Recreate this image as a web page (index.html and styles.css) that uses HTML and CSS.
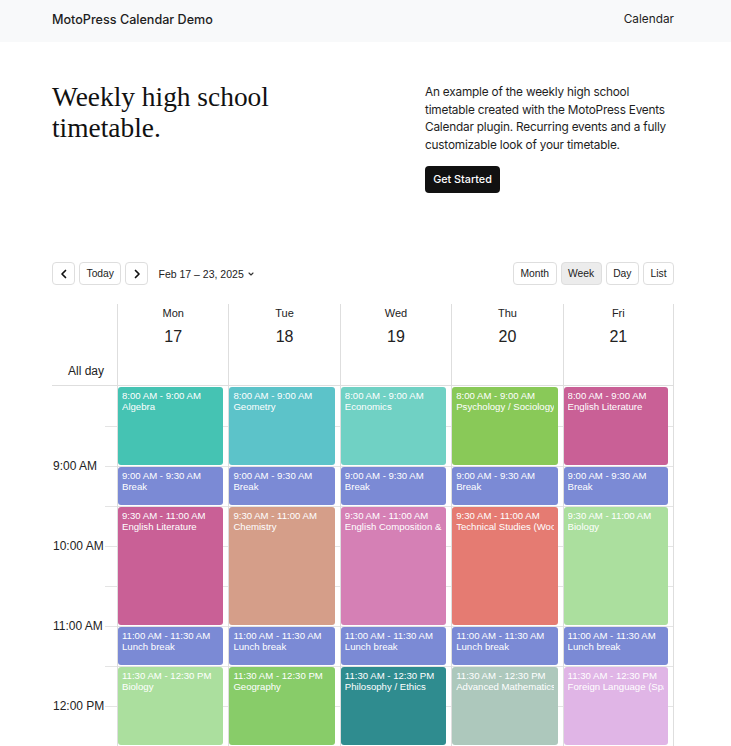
FILE: index.html
```html
<!DOCTYPE html>
<html lang="en">
<head>
<meta charset="utf-8">
<title>MotoPress Calendar Demo</title>
<link rel="stylesheet" href="styles.css">
</head>
<body>
<header class="site-header">
  <div class="wrap header-inner">
    <div class="brand">MotoPress Calendar Demo</div>
    <nav class="nav">Calendar</nav>
  </div>
</header>

<main class="wrap">
  <section class="hero">
    <h1 class="hero-title">Weekly high school timetable.</h1>
    <div class="hero-side">
      <p class="hero-text">An example of the weekly high school timetable created with the MotoPress Events Calendar plugin. Recurring events and a fully customizable look of your timetable.</p>
      <a class="btn-dark" href="#">Get Started</a>
    </div>
  </section>

  <section class="calendar">
    <div class="toolbar">
      <div class="tb-left">
        <button class="tb-btn tb-icon" aria-label="prev"><svg width="10" height="10" viewBox="0 0 10 10"><path d="M6.5 1.5 3 5l3.5 3.5" fill="none" stroke="#111" stroke-width="1.7" stroke-linecap="round" stroke-linejoin="round"/></svg></button>
        <button class="tb-btn">Today</button>
        <button class="tb-btn tb-icon" aria-label="next"><svg width="10" height="10" viewBox="0 0 10 10"><path d="M3.5 1.5 7 5 3.5 8.5" fill="none" stroke="#111" stroke-width="1.7" stroke-linecap="round" stroke-linejoin="round"/></svg></button>
        <div class="tb-title">Feb 17 – 23, 2025 <svg width="8" height="8" viewBox="0 0 8 8"><path d="M2 3l2 2 2-2" fill="none" stroke="#333" stroke-width="1.1" stroke-linecap="round" stroke-linejoin="round"/></svg></div>
      </div>
      <div class="tb-right">
        <button class="tb-btn">Month</button>
        <button class="tb-btn active">Week</button>
        <button class="tb-btn">Day</button>
        <button class="tb-btn">List</button>
      </div>
    </div>

    <div class="cal-head">
      <div class="axis-head">All day</div>
      <div class="day-head"><span class="dname">Mon</span><span class="dnum">17</span></div>
      <div class="day-head"><span class="dname">Tue</span><span class="dnum">18</span></div>
      <div class="day-head"><span class="dname">Wed</span><span class="dnum">19</span></div>
      <div class="day-head"><span class="dname">Thu</span><span class="dnum">20</span></div>
      <div class="day-head last"><span class="dname">Fri</span><span class="dnum">21</span></div>
    </div>

    <div class="cal-body">
      <div class="axis">
        <div class="tlabel">9:00 AM</div>
        <div class="tlabel">10:00 AM</div>
        <div class="tlabel">11:00 AM</div>
        <div class="tlabel">12:00 PM</div>
      </div>

      <div class="day">
        <div class="ev" style="height:78px;background:#45c3b3"><span>8:00 AM - 9:00 AM</span><span>Algebra</span></div>
        <div class="ev" style="height:38px;background:#7b8ad5"><span>9:00 AM - 9:30 AM</span><span>Break</span></div>
        <div class="ev" style="height:118px;background:#c96096"><span>9:30 AM - 11:00 AM</span><span>English Literature</span></div>
        <div class="ev" style="height:38px;background:#7b8ad5"><span>11:00 AM - 11:30 AM</span><span>Lunch break</span></div>
        <div class="ev" style="height:78px;background:#abdf9e"><span>11:30 AM - 12:30 PM</span><span>Biology</span></div>
      </div>

      <div class="day">
        <div class="ev" style="height:78px;background:#5cc3c9"><span>8:00 AM - 9:00 AM</span><span>Geometry</span></div>
        <div class="ev" style="height:38px;background:#7b8ad5"><span>9:00 AM - 9:30 AM</span><span>Break</span></div>
        <div class="ev" style="height:118px;background:#d59e89"><span>9:30 AM - 11:00 AM</span><span>Chemistry</span></div>
        <div class="ev" style="height:38px;background:#7b8ad5"><span>11:00 AM - 11:30 AM</span><span>Lunch break</span></div>
        <div class="ev" style="height:78px;background:#88cc69"><span>11:30 AM - 12:30 PM</span><span>Geography</span></div>
      </div>

      <div class="day">
        <div class="ev" style="height:78px;background:#70d1c4"><span>8:00 AM - 9:00 AM</span><span>Economics</span></div>
        <div class="ev" style="height:38px;background:#7b8ad5"><span>9:00 AM - 9:30 AM</span><span>Break</span></div>
        <div class="ev" style="height:118px;background:#d580b5"><span>9:30 AM - 11:00 AM</span><span>English Composition &amp; Writing</span></div>
        <div class="ev" style="height:38px;background:#7b8ad5"><span>11:00 AM - 11:30 AM</span><span>Lunch break</span></div>
        <div class="ev" style="height:78px;background:#2f8c8f"><span>11:30 AM - 12:30 PM</span><span>Philosophy / Ethics</span></div>
      </div>

      <div class="day">
        <div class="ev" style="height:78px;background:#89c958"><span>8:00 AM - 9:00 AM</span><span>Psychology / Sociology</span></div>
        <div class="ev" style="height:38px;background:#7b8ad5"><span>9:00 AM - 9:30 AM</span><span>Break</span></div>
        <div class="ev" style="height:118px;background:#e57b72"><span>9:30 AM - 11:00 AM</span><span>Technical Studies (Woodwork)</span></div>
        <div class="ev" style="height:38px;background:#7b8ad5"><span>11:00 AM - 11:30 AM</span><span>Lunch break</span></div>
        <div class="ev" style="height:78px;background:#adc8bc"><span>11:30 AM - 12:30 PM</span><span>Advanced Mathematics (Calculus)</span></div>
      </div>

      <div class="day last">
        <div class="ev" style="height:78px;background:#c96096"><span>8:00 AM - 9:00 AM</span><span>English Literature</span></div>
        <div class="ev" style="height:38px;background:#7b8ad5"><span>9:00 AM - 9:30 AM</span><span>Break</span></div>
        <div class="ev" style="height:118px;background:#abdf9e"><span>9:30 AM - 11:00 AM</span><span>Biology</span></div>
        <div class="ev" style="height:38px;background:#7b8ad5"><span>11:00 AM - 11:30 AM</span><span>Lunch break</span></div>
        <div class="ev" style="height:78px;background:#e0b5e6"><span>11:30 AM - 12:30 PM</span><span>Foreign Language (Spanish)</span></div>
      </div>
    </div>
  </section>
</main>
</body>
</html>
```

FILE: styles.css
```css
* { box-sizing: border-box; }

html, body {
  margin: 0;
  padding: 0;
  background: #fff;
  color: #1e1e1e;
  font-family: Inter, "Liberation Sans", sans-serif;
}

.wrap {
  width: 622px;
  margin-left: 52px;
}

.site-header {
  background: #f8f9fa;
  height: 42px;
}

.header-inner {
  height: 38px;
  display: flex;
  align-items: center;
  justify-content: space-between;
}

.brand {
  font-size: 12.6px;
  font-weight: 500;
}

.nav {
  font-size: 11.8px;
  font-weight: 400;
}

.hero {
  display: flex;
  justify-content: space-between;
  padding-top: 36px;
  height: 220px;
}

.hero-title {
  margin: 4px 0 0;
  font-family: "Liberation Serif", serif;
  font-weight: 400;
  font-size: 27.4px;
  line-height: 31px;
  width: 260px;
  color: #111;
}

.hero-side {
  width: 249px;
  padding-top: 6px;
}

.hero-text {
  margin: 0;
  font-size: 11.8px;
  letter-spacing: -0.2px;
  line-height: 17.6px;
  color: #1e1e1e;
}

.btn-dark {
  display: inline-flex;
  align-items: center;
  justify-content: center;
  margin-top: 12px;
  width: 75px;
  height: 27px;
  background: #111;
  color: #fff;
  border-radius: 4px;
  font-size: 10.8px;
  font-weight: 500;
  text-decoration: none;
}

/* Calendar */
.calendar {
  font-family: "Liberation Sans", Arial, sans-serif;
}

.toolbar {
  display: flex;
  justify-content: space-between;
  align-items: center;
  height: 23px;
  margin-bottom: 19px;
}

.tb-left, .tb-right {
  display: flex;
  align-items: center;
  gap: 4px;
}

.tb-btn {
  height: 23px;
  padding: 0 6.5px;
  border: 1px solid #dedede;
  border-radius: 4px;
  background: #fff;
  font-family: "Liberation Sans", Arial, sans-serif;
  font-size: 10.3px;
  color: #222;
  display: inline-flex;
  align-items: center;
  justify-content: center;
}

.tb-btn.active {
  background: #ececec;
}

.tb-icon {
  width: 23px;
  padding: 0;
}

.tb-title {
  margin-left: 6px;
  font-size: 10.5px;
  color: #222;
  display: flex;
  align-items: center;
  gap: 3px;
}

.cal-head {
  display: grid;
  grid-template-columns: 65px repeat(5, 1fr);
  height: 82px;
  border-bottom: 1px solid #dedede;
}

.axis-head {
  align-self: end;
  text-align: right;
  padding-right: 13px;
  padding-bottom: 5px;
  font-size: 12px;
  line-height: 18px;
  color: #222;
}

.day-head {
  border-left: 1px solid #dedede;
  display: flex;
  flex-direction: column;
  align-items: center;
  padding-top: 2px;
  color: #222;
}

.day-head.last, .day.last {
  border-right: 1px solid #dedede;
}

.dname {
  font-size: 11px;
  line-height: 14px;
}

.dnum {
  margin-top: 7px;
  font-size: 16px;
  line-height: 20px;
}

.cal-body {
  display: grid;
  grid-template-columns: 65px repeat(5, 1fr);
  height: 360px;
  background-image: repeating-linear-gradient(to bottom, transparent 0 39px, #e4e4e4 39px 40px);
  background-repeat: no-repeat;
  background-position: 53px 1px;
}

.axis {
  display: flex;
  flex-direction: column;
  gap: 62px;
  padding-top: 71px;
}

.tlabel {
  height: 18px;
  line-height: 18px;
  font-size: 12px;
  color: #222;
  padding-left: 1px;
  background: #fff;
  width: 53px;
}

.day {
  border-left: 1px solid #dedede;
  display: flex;
  flex-direction: column;
  padding-right: 5px;
  overflow: hidden;
}

.ev {
  flex: none;
  margin: 1px 0;
  border-radius: 3px;
  padding: 3px 4px;
  color: #fff;
  font-size: 9.6px;
  line-height: 11px;
  display: flex;
  flex-direction: column;
  overflow: hidden;
  white-space: nowrap;
}

.ev span {
  overflow: hidden;
}
```
